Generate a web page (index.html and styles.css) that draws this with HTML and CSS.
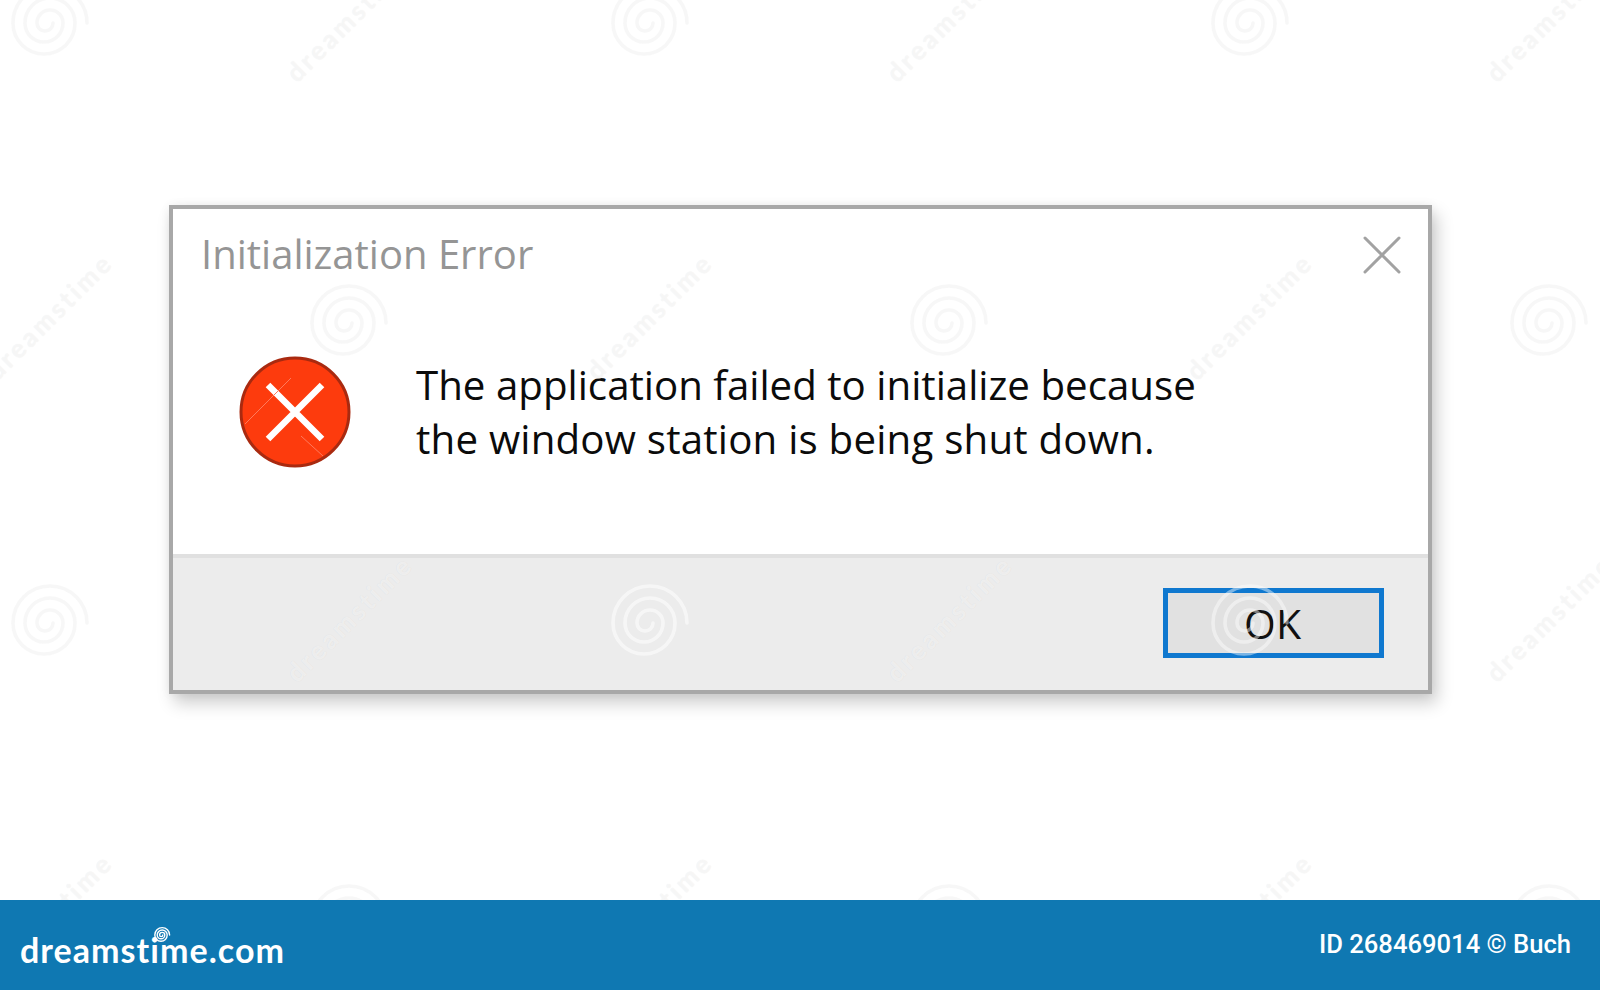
FILE: index.html
```html
<!DOCTYPE html>
<html lang="en">
<head>
<meta charset="utf-8">
<title>Initialization Error</title>
<link rel="stylesheet" href="styles.css">
</head>
<body>
<svg class="defs" width="0" height="0" aria-hidden="true">
  <symbol id="spiral" viewBox="0 0 100 100">
    <path d="M88 50A37 37 0 1 0 14 50A31 31 0 0 0 76 50A25 25 0 0 0 26 50A19 19 0 0 0 64 50A13 13 0 0 0 38 50A8 8 0 0 0 54 50" fill="none" stroke="currentColor" stroke-linecap="round"/>
  </symbol>
</svg>
<main class="stage">
  <section class="dialog">
    <header class="dialog-head">
      <h1 class="dialog-title">Initialization Error</h1>
      <svg class="close-icon" viewBox="0 0 38 38" aria-hidden="true">
        <path d="M2 2L36 36M36 2L2 36" stroke="#a2a2a2" stroke-width="3" stroke-linecap="round" fill="none"/>
      </svg>
    </header>
    <div class="dialog-body">
      <svg class="error-icon" viewBox="0 0 112 112" aria-hidden="true">
        <circle cx="56" cy="56" r="54" fill="#fd3b0d" stroke="#a92a10" stroke-width="3"/>
        <path d="M29 83L83 29M29 29L83 83" stroke="#fff" stroke-width="6.5" fill="none"/>
        <path d="M6 68L52 22M62 80L84 100" stroke="#ff7a5c" stroke-width="1" fill="none"/>
      </svg>
      <p class="message">The application failed to initialize because<br><span class="message-second">the window station is being shut down.</span></p>
    </div>
    <footer class="dialog-foot">
      <button class="ok-button" type="button">OK</button>
    </footer>
  </section>

  <div class="watermarks" aria-hidden="true">
    <svg class="mark mark-a1"><use href="#spiral"/></svg>
    <svg class="mark mark-a2"><use href="#spiral"/></svg>
    <svg class="mark mark-a3"><use href="#spiral"/></svg>
    <svg class="mark mark-b1"><use href="#spiral"/></svg>
    <svg class="mark mark-b2"><use href="#spiral"/></svg>
    <svg class="mark mark-b3"><use href="#spiral"/></svg>
    <svg class="mark mark-c1"><use href="#spiral"/></svg>
    <svg class="mark mark-c2"><use href="#spiral"/></svg>
    <svg class="mark mark-c3"><use href="#spiral"/></svg>
    <svg class="mark mark-d1"><use href="#spiral"/></svg>
    <svg class="mark mark-d2"><use href="#spiral"/></svg>
    <svg class="mark mark-d3"><use href="#spiral"/></svg>
    <span class="wm wm-a1">dreamstime</span>
    <span class="wm wm-a2">dreamstime</span>
    <span class="wm wm-a3">dreamstime</span>
    <span class="wm wm-b1">dreamstime</span>
    <span class="wm wm-b2">dreamstime</span>
    <span class="wm wm-b3">dreamstime</span>
    <span class="wm wm-c1">dreamstime</span>
    <span class="wm wm-c2">dreamstime</span>
    <span class="wm wm-c3">dreamstime</span>
    <span class="wm wm-d1">dreamstime</span>
    <span class="wm wm-d2">dreamstime</span>
    <span class="wm wm-d3">dreamstime</span>
  </div>
</main>
<footer class="banner">
  <div class="logo">
    <span class="logo-text">dreamstime.com</span>
    <svg class="logo-spiral"><use href="#spiral"/></svg>
  </div>
  <div class="credit">ID 268469014 © Buch</div>
</footer>
</body>
</html>
```
FILE: styles.css
```css
* { box-sizing: border-box; }

html, body {
  margin: 0;
  height: 990px;
  overflow: hidden;
  background: #fff;
}

body {
  display: flex;
  flex-direction: column;
  font-family: "Open Sans", "Liberation Sans", sans-serif;
}

.defs { position: absolute; }

.stage {
  position: relative;
  height: 900px;
  padding: 205px 0 0 169px;
  overflow: hidden;
}

.dialog {
  display: flex;
  flex-direction: column;
  width: 1263px;
  height: 489px;
  border: 4px solid #a8a8a8;
  background: #fff;
  box-shadow: 5px 9px 16px rgba(0, 0, 0, 0.2), 0 0 10px rgba(0, 0, 0, 0.05);
}

.dialog-head {
  display: flex;
  justify-content: space-between;
  align-items: flex-start;
  height: 61px;
  padding: 20px 27px 0 28px;
}

.dialog-title {
  margin: 0;
  font-size: 40px;
  line-height: 50px;
  font-weight: 400;
  color: #959595;
}

.close-icon {
  width: 38px;
  height: 38px;
  margin-top: 7px;
  flex: none;
}

.dialog-body {
  flex: 1;
  display: flex;
  align-items: center;
  gap: 65px;
  padding-left: 66px;
}

.error-icon {
  width: 112px;
  height: 112px;
  flex: none;
}

.message {
  margin: 0;
  font-size: 40.25px;
  line-height: 54px;
  color: #0b0b0b;
}

.message-second {
  letter-spacing: 0.2px;
}

.dialog-foot {
  display: flex;
  justify-content: flex-end;
  align-items: center;
  height: 136px;
  padding: 0 44px 2px 0;
  border-top: 4px solid #e0e0e0;
  background: #ececec;
}

.ok-button {
  width: 221px;
  height: 70px;
  padding: 0 2px 0 0;
  border: 5px solid #0f78cf;
  border-radius: 0;
  background: #e1e1e1;
  color: #111;
  font: 400 41px/1 "Open Sans", "Liberation Sans", sans-serif;
}

/* Watermark overlay */
.watermarks {
  position: absolute;
  inset: 0;
  pointer-events: none;
}

.mark {
  position: absolute;
  width: 100px;
  height: 100px;
  color: rgba(190, 190, 190, 0.13);
  stroke-width: 3.6;
}

.mark-a1 { left: -1px; top: -27px; }
.mark-a2 { left: 599px; top: -27px; }
.mark-a3 { left: 1199px; top: -27px; }
.mark-b1 { left: 298px; top: 273px; }
.mark-b2 { left: 898px; top: 273px; }
.mark-b3 { left: 1498px; top: 273px; }
.mark-c1 { left: -1px; top: 573px; }
.mark-c2 { left: 599px; top: 573px; color: rgba(255, 255, 255, 0.55); }
.mark-c3 { left: 1199px; top: 573px; color: rgba(255, 255, 255, 0.45); }
.mark-d1 { left: 298px; top: 873px; }
.mark-d2 { left: 898px; top: 873px; }
.mark-d3 { left: 1498px; top: 873px; }

.wm {
  position: absolute;
  width: 200px;
  margin: -14px 0 0 -100px;
  text-align: center;
  font: 700 26px/28px "Lato", sans-serif;
  letter-spacing: 3px;
  color: rgba(255, 255, 255, 0.55);
  text-shadow: 0 0 1px rgba(0, 0, 0, 0.08);
  transform: rotate(-45deg);
}

.wm-a1 { left: 349px; top: 18px; }
.wm-a2 { left: 949px; top: 18px; }
.wm-a3 { left: 1549px; top: 18px; }
.wm-b1 { left: 49px; top: 316px; }
.wm-b2 { left: 649px; top: 316px; }
.wm-b3 { left: 1249px; top: 316px; }
.wm-c1 { left: 349px; top: 618px; }
.wm-c2 { left: 949px; top: 618px; }
.wm-c3 { left: 1549px; top: 618px; }
.wm-d1 { left: 49px; top: 916px; }
.wm-d2 { left: 649px; top: 916px; }
.wm-d3 { left: 1249px; top: 916px; }

/* Bottom banner */
.banner {
  display: flex;
  justify-content: space-between;
  align-items: center;
  height: 90px;
  padding: 0 29px 0 20px;
  background: #0f78b2;
  color: #fff;
}

.logo {
  position: relative;
  margin-top: 10px;
}

.logo-text {
  font: 700 34px/40px "Lato", sans-serif;
  letter-spacing: 1.05px;
}

.logo-spiral {
  position: absolute;
  left: 132px;
  top: -5px;
  width: 20px;
  height: 20px;
  color: #fff;
  stroke-width: 7;
}

.credit {
  font: 500 25.6px/30px "Roboto", sans-serif;
  margin-bottom: 2px;
}
```
